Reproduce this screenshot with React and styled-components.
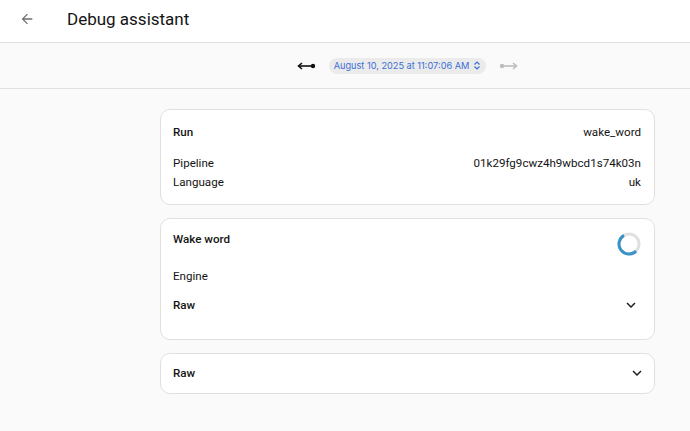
import React from 'react';
import styled, { createGlobalStyle } from 'styled-components';

const GlobalStyle = createGlobalStyle`
    html, body {
        margin: 0;
        padding: 0;
        background: #fafafa;
        font-family: Roboto, "Noto Sans", sans-serif;
        color: #141414;
    }
`;

const Chevron = () => (
    <svg width="18" height="18" viewBox="0 0 24 24">
        <path d="M7.41 8.58L12 13.17l4.59-4.59L18 10l-6 6-6-6 1.41-1.42z" fill="#1f1f1f" />
    </svg>
);

const Spinner = () => (
    <svg width="24" height="24" viewBox="0 0 24 24">
        <circle cx="12" cy="12" r="10" fill="none" stroke="#e0e0e0" strokeWidth="3" />
        <path d="M7 3.34 A10 10 0 1 0 19.07 19.07" fill="none" stroke="#3b93c7" strokeWidth="3" />
    </svg>
);

const App = () => {
    return (
        <>
            <GlobalStyle />
            <Page>
                <Header>
                    <BackButton>
                        <svg width="16" height="16" viewBox="0 0 24 24">
                            <path d="M20 11H7.83l5.59-5.59L12 4l-8 8 8 8 1.41-1.41L7.83 13H20v-2z" fill="#707070" />
                        </svg>
                    </BackButton>
                    <Title>Debug assistant</Title>
                </Header>
                <Toolbar>
                    <Inner>
                        <NavIcon>
                            <svg width="20" height="10" viewBox="0 0 20 10">
                                <path d="M2 5 H15" stroke="#111" strokeWidth="1.6" />
                                <path d="M5 2 L1.5 5 L5 8" stroke="#111" strokeWidth="1.6" fill="none" />
                                <circle cx="16" cy="5" r="2.2" fill="#111" />
                            </svg>
                        </NavIcon>
                        <DatePill>
                            August 10, 2025 at 11:07:06 AM
                            <svg width="8" height="9" viewBox="0 0 8 9">
                                <path d="M1.5 3.5 L4 1 L6.5 3.5 M1.5 5.5 L4 8 L6.5 5.5" stroke="#3b6fd6" strokeWidth="1.2" fill="none" />
                            </svg>
                        </DatePill>
                        <NavIcon>
                            <svg width="20" height="10" viewBox="0 0 20 10">
                                <path d="M5 5 H18" stroke="#bdbdbd" strokeWidth="1.6" />
                                <path d="M15 2 L18.5 5 L15 8" stroke="#bdbdbd" strokeWidth="1.6" fill="none" />
                                <circle cx="4" cy="5" r="2.2" fill="#bdbdbd" />
                            </svg>
                        </NavIcon>
                    </Inner>
                </Toolbar>
                <Content>
                    <Card>
                        <Row>
                            <Label $bold>Run</Label>
                            <Value>wake_word</Value>
                        </Row>
                        <Group>
                            <Row>
                                <Label>Pipeline</Label>
                                <Value>01k29fg9cwz4h9wbcd1s74k03n</Value>
                            </Row>
                            <Row>
                                <Label>Language</Label>
                                <Value>uk</Value>
                            </Row>
                        </Group>
                    </Card>
                    <Card $pb={24}>
                        <HeadRow>
                            <Label $bold>Wake word</Label>
                            <Spinner />
                        </HeadRow>
                        <EngineRow>
                            <Label>Engine</Label>
                        </EngineRow>
                        <ExpandRow $right={1}>
                            <Label $bold>Raw</Label>
                            <Chevron />
                        </ExpandRow>
                    </Card>
                    <Card $py={9} $pb={10}>
                        <ExpandRow $right={-5}>
                            <Label $bold>Raw</Label>
                            <Chevron />
                        </ExpandRow>
                    </Card>
                </Content>
            </Page>
        </>
    );
};

const Page = styled.div`
    min-height: 100vh;
    background: #fafafa;
`;

const Header = styled.header`
    height: 38px;
    display: flex;
    align-items: center;
    background: #ffffff;
    border-bottom: 1px solid #e0e0e0;
    padding: 0 0 4px 19px;
`;

const BackButton = styled.div`
    width: 16px;
    height: 16px;
    display: flex;
    align-items: center;
    justify-content: center;
`;

const Title = styled.h1`
    margin: 0 0 0 32px;
    font-size: 17px;
    font-weight: 400;
    color: #141414;
`;

const Toolbar = styled.div`
    height: 45px;
    border-bottom: 1px solid #e0e0e0;
    padding-left: 125px;
    display: flex;
    align-items: center;
`;

const Inner = styled.div`
    flex: 1;
    display: flex;
    align-items: center;
    justify-content: center;
    gap: 12px;
`;

const NavIcon = styled.div`
    display: flex;
    align-items: center;
`;

const DatePill = styled.div`
    display: flex;
    align-items: center;
    gap: 4px;
    height: 16px;
    padding: 0 5px 0 5px;
    background: #ebebeb;
    border-radius: 8px;
    font-family: "Inter", "Noto Sans", sans-serif;
    font-size: 9.2px;
    color: #3b6fd6;
`;

const Content = styled.main`
    width: 495px;
    margin: 20px 0 0 160px;
    display: flex;
    flex-direction: column;
    gap: 13px;
`;

const Card = styled.section`
    background: #ffffff;
    border: 1px solid #e0e0e0;
    border-radius: 10px;
    padding: ${(p) => p.$py ?? 12}px 13px ${(p) => p.$pb ?? p.$py ?? 13}px 12px;
`;

const Row = styled.div`
    display: flex;
    justify-content: space-between;
    align-items: center;
    height: 19px;
    font-size: 11.6px;
`;

const Group = styled.div`
    margin-top: 12px;
`;

const HeadRow = styled.div`
    display: flex;
    justify-content: space-between;
    align-items: flex-start;
    height: 28px;
    font-size: 11.6px;
    padding-top: 1px;
`;

const EngineRow = styled.div`
    margin-top: 9px;
    font-size: 11.6px;
    height: 17px;
`;

const ExpandRow = styled.div`
    display: flex;
    justify-content: space-between;
    align-items: center;
    margin-top: 9px;
    margin-right: ${(p) => p.$right ?? 0}px;
    font-size: 11.6px;
    height: 20px;
    &:first-child {
        margin-top: 0;
    }
`;

const Label = styled.span`
    font-weight: ${(p) => (p.$bold ? 500 : 400)};
    color: #141414;
`;

const Value = styled.span`
    color: #141414;
`;

export default App;
